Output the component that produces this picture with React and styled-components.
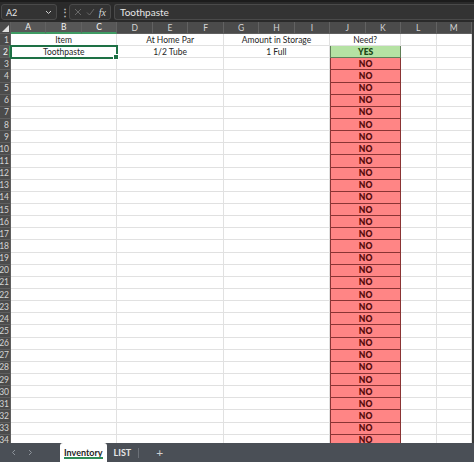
import React from "react";
import styled, { createGlobalStyle } from "styled-components";

const GlobalStyle = createGlobalStyle`
  html, body { margin: 0; padding: 0; background: #ffffff; }
  * { box-sizing: border-box; }
`;

const COLS = ["A", "B", "C", "D", "E", "F", "G", "H", "I", "J", "K", "L", "M"];
const ROW_COUNT = 34;
const ROW_H = 12.15;

const Window = styled.div`
  width: 474px;
  height: 462px;
  display: flex;
  flex-direction: column;
  overflow: hidden;
  font-family: "Lato", "Liberation Sans", sans-serif;
`;

const FormulaBar = styled.div`
  height: 22px;
  flex: none;
  display: flex;
  align-items: center;
  gap: 3px;
  padding: 0 0 0 1px;
  background: #2a2a2a;
  border-top: 2px solid #1c1c1c;
`;

const Box = styled.div`
  height: 16px;
  display: flex;
  align-items: center;
  background: #333333;
  border: 1px solid #4a4a4a;
  border-radius: 3px;
  color: #e6e6e6;
  font-size: 9px;
`;

const NameBox = styled(Box)`
  width: 56px;
  justify-content: space-between;
  padding: 0 4px;
`;

const FxBox = styled(Box)`
  width: 42px;
  justify-content: space-around;
  padding: 0 2px;
`;

const InputBox = styled(Box)`
  flex: 1;
  padding-left: 5px;
  border-right: none;
  border-radius: 3px 0 0 3px;
  font-size: 10px;
`;

const Dots = styled.span`
  color: #bdbdbd;
  font-size: 10px;
  width: 6px;
  text-align: center;
  font-weight: 700;
`;

const Fx = styled.span`
  color: #d8d8d8;
  font-family: "Liberation Serif", serif;
  font-style: italic;
  font-size: 10px;
`;

const SheetArea = styled.div`
  flex: 1;
  display: flex;
  overflow: hidden;
  background: #ffffff;
`;

const Grid = styled.div`
  width: 472px;
  display: grid;
  grid-template-columns: 11px repeat(13, 1fr);
  grid-template-rows: 12px;
  grid-auto-rows: ${ROW_H}px;
  align-content: start;
`;

const ScrollStrip = styled.div`
  width: 2px;
  background: #3a3a3a;
`;

const Corner = styled.div`
  background: #4b4b4b;
  border-right: 1px solid #5f5f5f;
  border-bottom: 1px solid #5f5f5f;
  position: relative;
  &::after {
    content: "";
    position: absolute;
    right: 1px;
    bottom: 1px;
    border-left: 7px solid transparent;
    border-bottom: 7px solid #e0e0e0;
  }
`;

const ColHead = styled.div`
  background: ${(p) => (p.$active ? "#575757" : "#4b4b4b")};
  color: ${(p) => (p.$active ? "#f2f2f2" : "#d4d4d4")};
  border-right: 1px solid #626262;
  border-bottom: ${(p) => (p.$active ? "2px solid #3f9b63" : "1px solid #5f5f5f")};
  font-size: 8.5px;
  display: flex;
  align-items: center;
  justify-content: center;
`;

const RowHead = styled.div`
  background: ${(p) => (p.$active ? "#575757" : "#4b4b4b")};
  color: ${(p) => (p.$active ? "#f2f2f2" : "#d4d4d4")};
  border-right: ${(p) => (p.$active ? "2px solid #3f9b63" : "1px solid #5f5f5f")};
  border-bottom: 1px solid #5f5f5f;
  font-size: 8.5px;
  display: flex;
  align-items: center;
  justify-content: flex-end;
  padding-right: 1px;
  overflow: hidden;
  white-space: nowrap;
`;

const Cell = styled.div`
  grid-column: span ${(p) => p.$span || 1};
  border-right: 1px solid #e1e1e1;
  border-bottom: 1px solid #e1e1e1;
  color: #262626;
  font-size: 8.5px;
  display: flex;
  align-items: center;
  justify-content: center;
  white-space: nowrap;
  position: relative;
  ${(p) =>
    p.$selected &&
    `
    outline: 2px solid #1e7145;
    outline-offset: -1px;
    z-index: 1;
    &::after {
      content: "";
      position: absolute;
      right: -3px;
      bottom: -3px;
      width: 4px;
      height: 4px;
      background: #1e7145;
      border: 1px solid #ffffff;
    }
  `}
`;

const StatusCell = styled(Cell)`
  background: ${(p) => (p.$yes ? "#b5e2a3" : "#ff8585")};
  color: ${(p) => (p.$yes ? "#1d4a17" : "#5a0c0c")};
  border: 1px solid ${(p) => (p.$yes ? "#5f7f57" : "#8a3434")};
  border-top: none;
  font-weight: 800;
`;

const TabBar = styled.div`
  height: 19px;
  flex: none;
  display: flex;
  align-items: stretch;
  background: #4a4f56;
  color: #e0e0e0;
  font-size: 9px;
`;

const NavArrows = styled.div`
  width: 60px;
  display: flex;
  align-items: center;
  gap: 12px;
  padding-left: 11px;
`;

const Tab = styled.div`
  display: flex;
  align-items: center;
  padding: 0 ${(p) => (p.$active ? "4px" : "7px")};
  background: ${(p) => (p.$active ? "#ffffff" : "transparent")};
  color: ${(p) => (p.$active ? "#1f1f1f" : "#e6e6e6")};
  font-weight: 700;
  border-radius: ${(p) => (p.$active ? "3px 3px 0 0" : "0")};
  position: relative;
  ${(p) =>
    p.$active &&
    `
    &::after {
      content: "";
      position: absolute;
      left: 4px;
      right: 4px;
      bottom: 3px;
      height: 2px;
      background: #2e8b57;
    }
  `}
`;

const Sep = styled.div`
  width: 1px;
  height: 10px;
  align-self: center;
  background: #6c7178;
`;

const AddTab = styled.div`
  display: flex;
  align-items: center;
  padding-left: 17px;
  font-size: 12px;
  color: #d0d0d0;
`;

const Chevron = () => (
  <svg width="7" height="5" viewBox="0 0 7 5" fill="none" stroke="#cfcfcf" strokeWidth="1">
    <path d="M1 1l2.5 2.5L6 1" />
  </svg>
);

const XIcon = () => (
  <svg width="8" height="8" viewBox="0 0 8 8" stroke="#6e6e6e" strokeWidth="0.9">
    <path d="M1 1l6 6M7 1L1 7" />
  </svg>
);

const CheckIcon = () => (
  <svg width="9" height="8" viewBox="0 0 9 8" fill="none" stroke="#6e6e6e" strokeWidth="0.9">
    <path d="M1 4.5l2.5 2.5L8 1" />
  </svg>
);

const Arrow = ({ dir }) => (
  <svg width="5" height="7" viewBox="0 0 5 7" fill="none" stroke="#8e949b" strokeWidth="1">
    <path d={dir === "left" ? "M4 1L1.5 3.5L4 6" : "M1 1l2.5 2.5L1 6"} />
  </svg>
);

const dataRows = [
  { a: "Item", d: "At Home Par", g: "Amount in Storage", j: "Need?", plain: true },
  { a: "Toothpaste", d: "1/2 Tube", g: "1 Full", j: "YES", yes: true },
];

export default function App() {
  const rows = [];
  for (let i = 1; i <= ROW_COUNT; i++) {
    const r = dataRows[i - 1] || { a: "", d: "", g: "", j: "NO" };
    rows.push(
      <React.Fragment key={i}>
        <RowHead $active={i === 2}>{i}</RowHead>
        <Cell $span={3} $selected={i === 2}>{r.a}</Cell>
        <Cell $span={3}>{r.d}</Cell>
        <Cell $span={3}>{r.g}</Cell>
        {r.plain ? (
          <Cell $span={2}>{r.j}</Cell>
        ) : (
          <StatusCell $span={2} $yes={r.yes}>{r.j}</StatusCell>
        )}
        <Cell />
        <Cell />
      </React.Fragment>
    );
  }

  return (
    <Window>
      <GlobalStyle />
      <FormulaBar>
        <NameBox>
          <span>A2</span>
          <Chevron />
        </NameBox>
        <Dots>⋮</Dots>
        <FxBox>
          <XIcon />
          <CheckIcon />
          <Fx>fx</Fx>
        </FxBox>
        <InputBox>Toothpaste</InputBox>
      </FormulaBar>
      <SheetArea>
        <Grid>
          <Corner />
          {COLS.map((c, idx) => (
            <ColHead key={c} $active={idx < 3}>{c}</ColHead>
          ))}
          {rows}
        </Grid>
        <ScrollStrip />
      </SheetArea>
      <TabBar>
        <NavArrows>
          <Arrow dir="left" />
          <Arrow dir="right" />
        </NavArrows>
        <Tab $active>Inventory</Tab>
        <Tab>LIST</Tab>
        <Sep />
        <AddTab>+</AddTab>
      </TabBar>
    </Window>
  );
}
